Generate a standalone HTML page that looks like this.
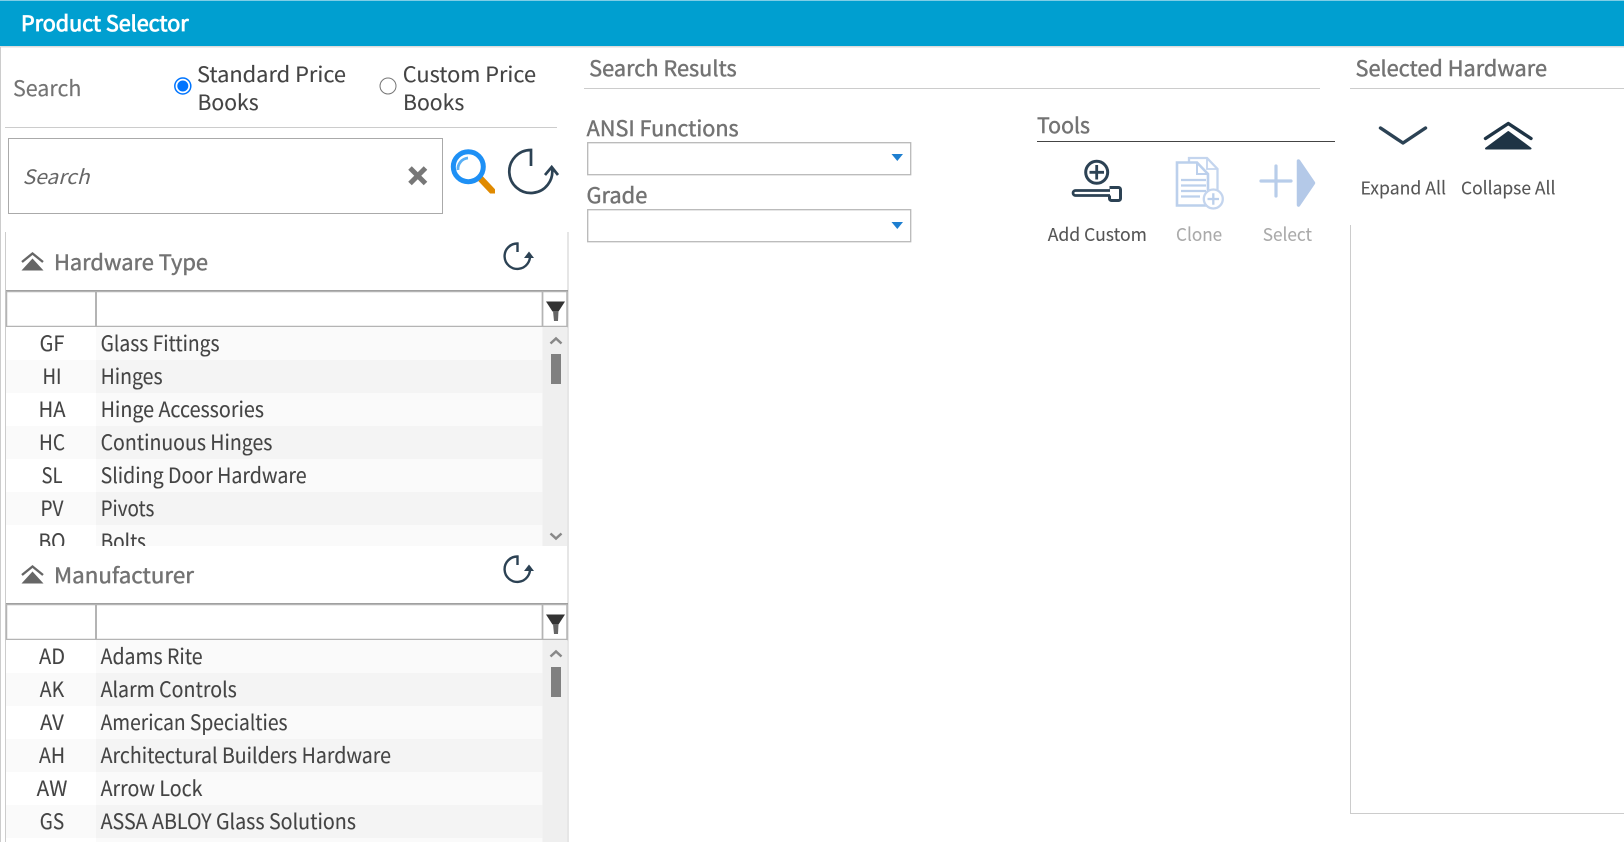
<!DOCTYPE html>
<html lang="en"><head><meta charset="utf-8"><title>Product Selector</title>
<style>
html,body{margin:0;padding:0;background:#fff;width:1624px;height:842px;overflow:hidden}
svg{display:block}
text{font-family:"Noto Sans CJK SC","Liberation Sans",sans-serif;white-space:pre}
.h{font-size:21px;fill:#737373;stroke:#737373;stroke-width:.45}
.t{font-size:21px;fill:#444;stroke:#444;stroke-width:.12}
.c{font-size:21px;fill:#444;stroke:#444;stroke-width:.12;text-anchor:middle}
.l{font-size:18px;fill:#555;stroke:#555;stroke-width:.1}
.d{font-size:18px;fill:#aaa;stroke:#aaa;stroke-width:.1}
</style></head><body>
<svg width="1624" height="842" viewBox="0 0 1624 842" xmlns="http://www.w3.org/2000/svg" fill="none">
<defs><clipPath id="c1"><rect x="0" y="327" width="1624" height="219"/></clipPath>
<clipPath id="mag"><rect x="445" y="140" width="50" height="53.5"/></clipPath></defs>
<rect width="1624" height="842" fill="#fff"/>
<rect y="1" width="1624" height="45" fill="#009fd0"/><rect width="1624" height="1" fill="#7fcde6"/>
<rect y="46" width="1624" height="1.5" fill="#ddd"/><rect y="47" width="1" height="795" fill="#ccc"/>
<text x="21" y="31" font-size="21" fill="#fff" stroke="#fff" stroke-width=".8" textLength="167.6" lengthAdjust="spacingAndGlyphs">Product Selector</text>

<text class="h" style="stroke-width:.15" x="13" y="96" textLength="68.4" lengthAdjust="spacingAndGlyphs">Search</text>
<circle cx="182.8" cy="86" r="8" stroke="#0075ff" stroke-width="1.5" fill="#fff"/><circle cx="182.8" cy="86" r="5.5" fill="#0075ff"/>
<text class="t" x="197" y="82" textLength="149" lengthAdjust="spacingAndGlyphs">Standard Price</text>
<text class="t" x="197.500" y="110" textLength="61.100" lengthAdjust="spacingAndGlyphs">Books</text>
<circle cx="388" cy="86" r="8" stroke="#767676" stroke-width="1" fill="#fff"/>
<text class="t" x="402.800" y="82" textLength="133.200" lengthAdjust="spacingAndGlyphs">Custom Price</text>
<text class="t" x="403" y="110" textLength="61.300" lengthAdjust="spacingAndGlyphs">Books</text>
<rect x="5" y="127" width="552" height="1" fill="#ccc"/>

<rect x="8.5" y="138.5" width="434" height="75" fill="#fff" stroke="#aaa"/>
<text x="22.500" y="184" font-size="20" font-style="italic" fill="#666" textLength="67" lengthAdjust="spacingAndGlyphs">Search</text>
<path d="M410 168L425.500 183.500M425.500 168L410 183.500" stroke="#777" stroke-width="5"/>
<g clip-path="url(#mag)"><path d="M479 177L496 195" stroke="#e08a00" stroke-width="6.500"/></g>
<circle cx="468.300" cy="166.700" r="15" stroke="#1e90f5" stroke-width="5" fill="#fff"/>
<path d="M458 170A11 11 0 0 1 468 158" stroke="#5ab0f5" stroke-width="2.800"/>
<path d="M531 166V150A21.500 21.500 0 1 0 552 168M545 175L551.700 167L558 175" stroke="#2c4254" stroke-width="2.700"/>

<rect x="5" y="232" width="1" height="610" fill="#ccc"/><rect x="567.500" y="232" width="1" height="610" fill="#ccc"/>

<!-- Hardware Type -->
<g id="s1" fill="none">
<path d="M22 262L32.500 253.500L43 262" stroke="#666" stroke-width="2.400"/><path d="M21.500 270.500L32.500 258.500L43.500 270.500Z" fill="#666"/>
<text class="h" x="54" y="269.800" textLength="154" lengthAdjust="spacingAndGlyphs">Hardware Type</text>
<path d="M517.500 252V243.500A12.700 12.700 0 1 0 529.800 254" stroke="#2c4254" stroke-width="2.400"/><path d="M529 251.500L524 258H534Z" fill="#2c4254"/>
<rect x="6" y="290" width="562" height="2" fill="#999"/>
<rect x="6.500" y="291.500" width="536" height="35" stroke="#b4b4b4" stroke-width="1.500"/><path d="M96 291.500V326.500" stroke="#b4b4b4" stroke-width="2"/>
<rect x="542.500" y="291.500" width="24.500" height="35" stroke="#b4b4b4" stroke-width="1.500"/>
<path d="M546 301.500H565L558.500 311.500H552.500Z" fill="#333"/><path d="M553 311H558.500L558 321H554Z" fill="#666"/>
</g>
<g clip-path="url(#c1)">
<rect x="6" y="327" width="90" height="33" fill="#fff"/><rect x="96" y="327" width="446.500" height="33" fill="#fafafa"/>
<rect x="6" y="360" width="90" height="33" fill="#fafafa"/><rect x="96" y="360" width="446.500" height="33" fill="#f4f4f4"/>
<rect x="6" y="393" width="90" height="33" fill="#fff"/><rect x="96" y="393" width="446.500" height="33" fill="#fafafa"/>
<rect x="6" y="426" width="90" height="33" fill="#fafafa"/><rect x="96" y="426" width="446.500" height="33" fill="#f4f4f4"/>
<rect x="6" y="459" width="90" height="33" fill="#fff"/><rect x="96" y="459" width="446.500" height="33" fill="#fafafa"/>
<rect x="6" y="492" width="90" height="33" fill="#fafafa"/><rect x="96" y="492" width="446.500" height="33" fill="#f4f4f4"/>
<rect x="6" y="525" width="90" height="33" fill="#fff"/><rect x="96" y="525" width="446.500" height="33" fill="#fafafa"/>
<rect x="542.500" y="327" width="24.500" height="219" fill="#efefef"/>
<text class="c" x="52" y="351" textLength="24.800" lengthAdjust="spacingAndGlyphs">GF</text><text class="t" x="100.600" y="351" textLength="119" lengthAdjust="spacingAndGlyphs">Glass Fittings</text>
<text class="c" x="52" y="384" textLength="19" lengthAdjust="spacingAndGlyphs">HI</text><text class="t" x="100.600" y="384" textLength="62" lengthAdjust="spacingAndGlyphs">Hinges</text>
<text class="c" x="52" y="417" textLength="27" lengthAdjust="spacingAndGlyphs">HA</text><text class="t" x="100.600" y="417" textLength="163.400" lengthAdjust="spacingAndGlyphs">Hinge Accessories</text>
<text class="c" x="52" y="450" textLength="26" lengthAdjust="spacingAndGlyphs">HC</text><text class="t" x="100.600" y="450" textLength="171.800" lengthAdjust="spacingAndGlyphs">Continuous Hinges</text>
<text class="c" x="52" y="483" textLength="21" lengthAdjust="spacingAndGlyphs">SL</text><text class="t" x="100.600" y="483" textLength="206" lengthAdjust="spacingAndGlyphs">Sliding Door Hardware</text>
<text class="c" x="52" y="516" textLength="23" lengthAdjust="spacingAndGlyphs">PV</text><text class="t" x="100.600" y="516" textLength="53.700" lengthAdjust="spacingAndGlyphs">Pivots</text>
<text class="c" x="52" y="549" textLength="27" lengthAdjust="spacingAndGlyphs">BO</text><text class="t" x="100.600" y="549" textLength="45.400" lengthAdjust="spacingAndGlyphs">Bolts</text>
</g>
<path d="M550.500 343.500L556 338.500L561.500 343.500" stroke="#888" stroke-width="2.500"/><rect x="551" y="354" width="10" height="30" fill="#808080"/>
<path d="M550.500 533.500L556 538.500L561.500 533.500" stroke="#888" stroke-width="2.500"/>

<!-- Manufacturer -->
<rect x="6" y="546" width="561" height="57" fill="#fff"/>
<g fill="none">
<path d="M22 575L32.500 566.500L43 575" stroke="#666" stroke-width="2.400"/><path d="M21.500 583.500L32.500 571.500L43.500 583.500Z" fill="#666"/>
<text class="h" x="54" y="582.800" textLength="139.900" lengthAdjust="spacingAndGlyphs">Manufacturer</text>
<path d="M517.500 565V556.500A12.700 12.700 0 1 0 529.800 567" stroke="#2c4254" stroke-width="2.400"/><path d="M529 564.500L524 571H534Z" fill="#2c4254"/>
<rect x="6" y="603" width="562" height="2" fill="#999"/>
<rect x="6.500" y="604.500" width="536" height="35" stroke="#b4b4b4" stroke-width="1.500"/><path d="M96 604.500V639.500" stroke="#b4b4b4" stroke-width="2"/>
<rect x="542.500" y="604.500" width="24.500" height="35" stroke="#b4b4b4" stroke-width="1.500"/>
<path d="M546 614.500H565L558.500 624.500H552.500Z" fill="#333"/><path d="M553 624H558.500L558 634H554Z" fill="#666"/>
</g>
<rect x="6" y="640" width="90" height="33" fill="#fff"/><rect x="96" y="640" width="446.500" height="33" fill="#fafafa"/>
<rect x="6" y="673" width="90" height="33" fill="#fafafa"/><rect x="96" y="673" width="446.500" height="33" fill="#f4f4f4"/>
<rect x="6" y="706" width="90" height="33" fill="#fff"/><rect x="96" y="706" width="446.500" height="33" fill="#fafafa"/>
<rect x="6" y="739" width="90" height="33" fill="#fafafa"/><rect x="96" y="739" width="446.500" height="33" fill="#f4f4f4"/>
<rect x="6" y="772" width="90" height="33" fill="#fff"/><rect x="96" y="772" width="446.500" height="33" fill="#fafafa"/>
<rect x="6" y="805" width="90" height="33" fill="#fafafa"/><rect x="96" y="805" width="446.500" height="33" fill="#f4f4f4"/>
<rect x="6" y="838" width="90" height="4" fill="#fff"/><rect x="96" y="838" width="446.500" height="4" fill="#fafafa"/>
<rect x="542.500" y="640" width="24.500" height="202" fill="#efefef"/>
<text class="c" x="52" y="664" textLength="26" lengthAdjust="spacingAndGlyphs">AD</text><text class="t" x="100.600" y="664" textLength="102" lengthAdjust="spacingAndGlyphs">Adams Rite</text>
<text class="c" x="52" y="697" textLength="24.400" lengthAdjust="spacingAndGlyphs">AK</text><text class="t" x="100.600" y="697" textLength="136.200" lengthAdjust="spacingAndGlyphs">Alarm Controls</text>
<text class="c" x="52" y="730" textLength="23.700" lengthAdjust="spacingAndGlyphs">AV</text><text class="t" x="100.600" y="730" textLength="186.900" lengthAdjust="spacingAndGlyphs">American Specialties</text>
<text class="c" x="52" y="763" textLength="26" lengthAdjust="spacingAndGlyphs">AH</text><text class="t" x="100.600" y="763" textLength="290.400" lengthAdjust="spacingAndGlyphs">Architectural Builders Hardware</text>
<text class="c" x="52" y="796" textLength="30.700" lengthAdjust="spacingAndGlyphs">AW</text><text class="t" x="100.600" y="796" textLength="101.800" lengthAdjust="spacingAndGlyphs">Arrow Lock</text>
<text class="c" x="52" y="829" textLength="24.400" lengthAdjust="spacingAndGlyphs">GS</text><text class="t" x="100.600" y="829" textLength="255.400" lengthAdjust="spacingAndGlyphs">ASSA ABLOY Glass Solutions</text>
<path d="M550.500 656.500L556 651.500L561.500 656.500" stroke="#888" stroke-width="2.500"/><rect x="551" y="667" width="10" height="30" fill="#808080"/>

<!-- Search Results -->
<text class="h" x="589.200" y="76" textLength="147.500" lengthAdjust="spacingAndGlyphs">Search Results</text>
<rect x="584" y="88" width="736" height="1" fill="#ccc"/>
<text class="h" x="586.700" y="136" textLength="152" lengthAdjust="spacingAndGlyphs">ANSI Functions</text>
<rect x="587.700" y="142.700" width="323" height="32" fill="#fff" stroke="#b8b8b8" stroke-width="1.300"/><path d="M891.500 154H903L897.300 161Z" fill="#1e7fd0"/>
<text class="h" x="586.500" y="203" textLength="60.800" lengthAdjust="spacingAndGlyphs">Grade</text>
<rect x="587.700" y="209.700" width="323" height="32" fill="#fff" stroke="#b8b8b8" stroke-width="1.300"/><path d="M891.500 222H903L897.300 229Z" fill="#1e7fd0"/>

<!-- Tools -->
<text class="h" x="1037" y="133" textLength="53" lengthAdjust="spacingAndGlyphs">Tools</text>
<rect x="1037" y="141" width="298" height="1" fill="#444"/>
<circle cx="1096.700" cy="172.300" r="11" stroke="#2c4254" stroke-width="3"/><path d="M1089.500 172.300H1104M1096.700 165V179.500" stroke="#2c4254" stroke-width="2.800"/>
<path d="M1110 190.500H1075.500A2.500 2.500 0 0 0 1075.500 195.500H1110" stroke="#2c4254" stroke-width="2.700"/>
<path d="M1109.500 187.500H1118.500A2 2 0 0 1 1120.500 189.500V198.500A2 2 0 0 1 1118.500 200.500H1111.500A2 2 0 0 1 1109.500 198.500V195.500" stroke="#2c4254" stroke-width="3"/>
<path d="M1189 162V158H1207L1217.500 169V199" stroke="#c4d5ee" stroke-width="2.300"/><path d="M1207 158V169H1217.500" stroke="#c4d5ee" stroke-width="1.800"/>
<path d="M1177 162.500H1197L1208 174V205.500H1177Z" fill="#fff" stroke="#bcd0ec" stroke-width="2.600"/><path d="M1197 162.500V174H1208" stroke="#bcd0ec" stroke-width="2"/>
<path d="M1181 180H1206M1181 185.500H1206M1181 191H1206M1181 196.500H1200" stroke="#bcd0ec" stroke-width="2.200"/>
<circle cx="1213.300" cy="199" r="9.500" fill="#fff" stroke="#c4d5ee" stroke-width="2.300"/><path d="M1207.500 199H1219M1213.300 193.200V204.800" stroke="#bcd0ec" stroke-width="2.300"/>
<path d="M1261 181H1291M1276 166V196" stroke="#b8cdea" stroke-width="3.200" stroke-linecap="round"/>
<path d="M1298.500 161L1313.500 183L1298.500 205Z" fill="#b4c9e8" stroke="#b4c9e8" stroke-width="3.500" stroke-linejoin="round"/>
<text class="l" x="1047.700" y="241" textLength="99.200" lengthAdjust="spacingAndGlyphs">Add Custom</text>
<text class="d" x="1176" y="241" textLength="46.200" lengthAdjust="spacingAndGlyphs">Clone</text>
<text class="d" x="1262.700" y="241" textLength="49.300" lengthAdjust="spacingAndGlyphs">Select</text>

<!-- Selected Hardware -->
<text class="h" x="1355.500" y="76" textLength="191.500" lengthAdjust="spacingAndGlyphs">Selected Hardware</text>
<rect x="1350" y="88" width="274" height="1" fill="#ccc"/>
<path d="M1380.500 128L1403 143L1425.500 128" stroke="#2c4254" stroke-width="3.400" stroke-linecap="round" stroke-linejoin="round"/>
<path d="M1485.500 138.500L1508.300 123.500L1531 138.500" stroke="#1f3445" stroke-width="3.400" stroke-linecap="round" stroke-linejoin="round"/>
<path d="M1486 148.500L1508.300 132L1530.500 148.500Z" fill="#1f3445" stroke="#1f3445" stroke-width="2" stroke-linejoin="round"/>
<text class="l" x="1360.500" y="194.300" textLength="85.500" lengthAdjust="spacingAndGlyphs">Expand All</text>
<text class="l" x="1461" y="194.300" textLength="94.400" lengthAdjust="spacingAndGlyphs">Collapse All</text>
<rect x="1350" y="225" width="1" height="589" fill="#ccc"/><rect x="1350" y="813" width="274" height="1" fill="#ccc"/>
</svg>
</body></html>
